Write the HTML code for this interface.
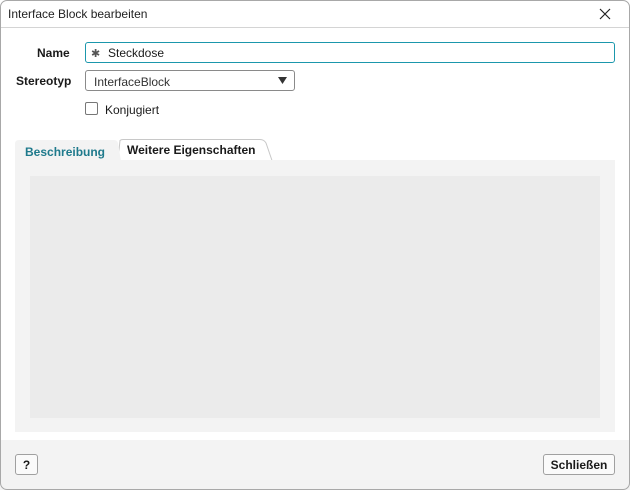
<!DOCTYPE html>
<html><head><meta charset="utf-8"><style>
*{box-sizing:border-box;margin:0;padding:0}
body{width:630px;height:490px;background:#fff;font-family:"Segoe UI","Liberation Sans",sans-serif;font-size:12px;color:#1a1a1a;position:relative;overflow:hidden}
.frame{position:absolute;left:0;top:0;width:630px;height:490px;border:1px solid #a8a8a8;border-radius:7px;pointer-events:none}
.title{position:absolute;left:8px;top:7px;font-size:12px;color:#222}
.sep{position:absolute;left:0;top:27px;width:630px;height:1px;background:#d4d4d4}
.x{position:absolute;left:598px;top:7px}
.lbl{position:absolute;font-weight:bold;font-size:12px}
.inp{position:absolute;left:85px;top:42px;width:530px;height:21px;border:1px solid #1b97ac;border-radius:3px}
.sel{position:absolute;left:85px;top:70px;width:210px;height:21px;border:1px solid #8a8a8a;border-radius:3px}
.cb{position:absolute;left:85px;top:102px;width:13px;height:13px;border:1px solid #777;border-radius:2px}
.t{position:absolute;font-size:12px;white-space:nowrap}
.panel{position:absolute;left:15px;top:160px;width:600px;height:272px;background:#f3f3f3}
.inner{position:absolute;left:30px;top:176px;width:570px;height:242px;background:#ebebeb}
.footer{position:absolute;left:0;top:440px;width:630px;height:50px;background:#f3f3f3}
.btn{position:absolute;height:21px;border:1px solid #a0a0a0;border-radius:3px;background:#fafafa;font-weight:bold;font-size:12px;text-align:center;line-height:20px}
</style></head><body>
<div class="title">Interface Block bearbeiten</div>
<svg class="x" width="14" height="14" viewBox="0 0 14 14"><path d="M2 2L12 12M12 2L2 12" stroke="#222" stroke-width="1.2"/></svg>
<div class="sep"></div>
<div class="lbl" style="left:37px;top:46px">Name</div>
<div class="inp"></div>
<div class="t" style="left:91px;top:47px;color:#555;font-size:11px">✱</div>
<div class="t" style="left:108px;top:46px">Steckdose</div>
<div class="lbl" style="left:16px;top:74px">Stereotyp</div>
<div class="sel"></div>
<div class="t" style="left:94px;top:75px;color:#333">InterfaceBlock</div>
<svg style="position:absolute;left:278px;top:77px" width="9" height="7"><path d="M0 0H9L4.5 7Z" fill="#333"/></svg>
<div class="cb"></div>
<div class="t" style="left:105px;top:103px">Konjugiert</div>
<svg style="position:absolute;left:15px;top:139px" width="265" height="22">
<path d="M103 21.5L105 1.5Q106 0.5 108 0.5H245Q249 0.5 251 4L257 21.5" fill="#fff" stroke="#c8c8c8"/>
<path d="M0 22V5Q0 1 4 1H99Q102 1 103 4L106 22Z" fill="#f3f3f3"/>
</svg>
<div class="t" style="left:25px;top:145px;font-weight:bold;color:#1f7a8c">Beschreibung</div>
<div class="t" style="left:127px;top:143px;font-weight:bold">Weitere Eigenschaften</div>
<div class="panel"></div>
<div class="inner"></div>
<div class="footer"></div>
<div class="btn" style="left:15px;top:454px;width:23px">?</div>
<div class="btn" style="left:543px;top:454px;width:72px">Schließen</div>
<div class="frame"></div>
</body></html>
